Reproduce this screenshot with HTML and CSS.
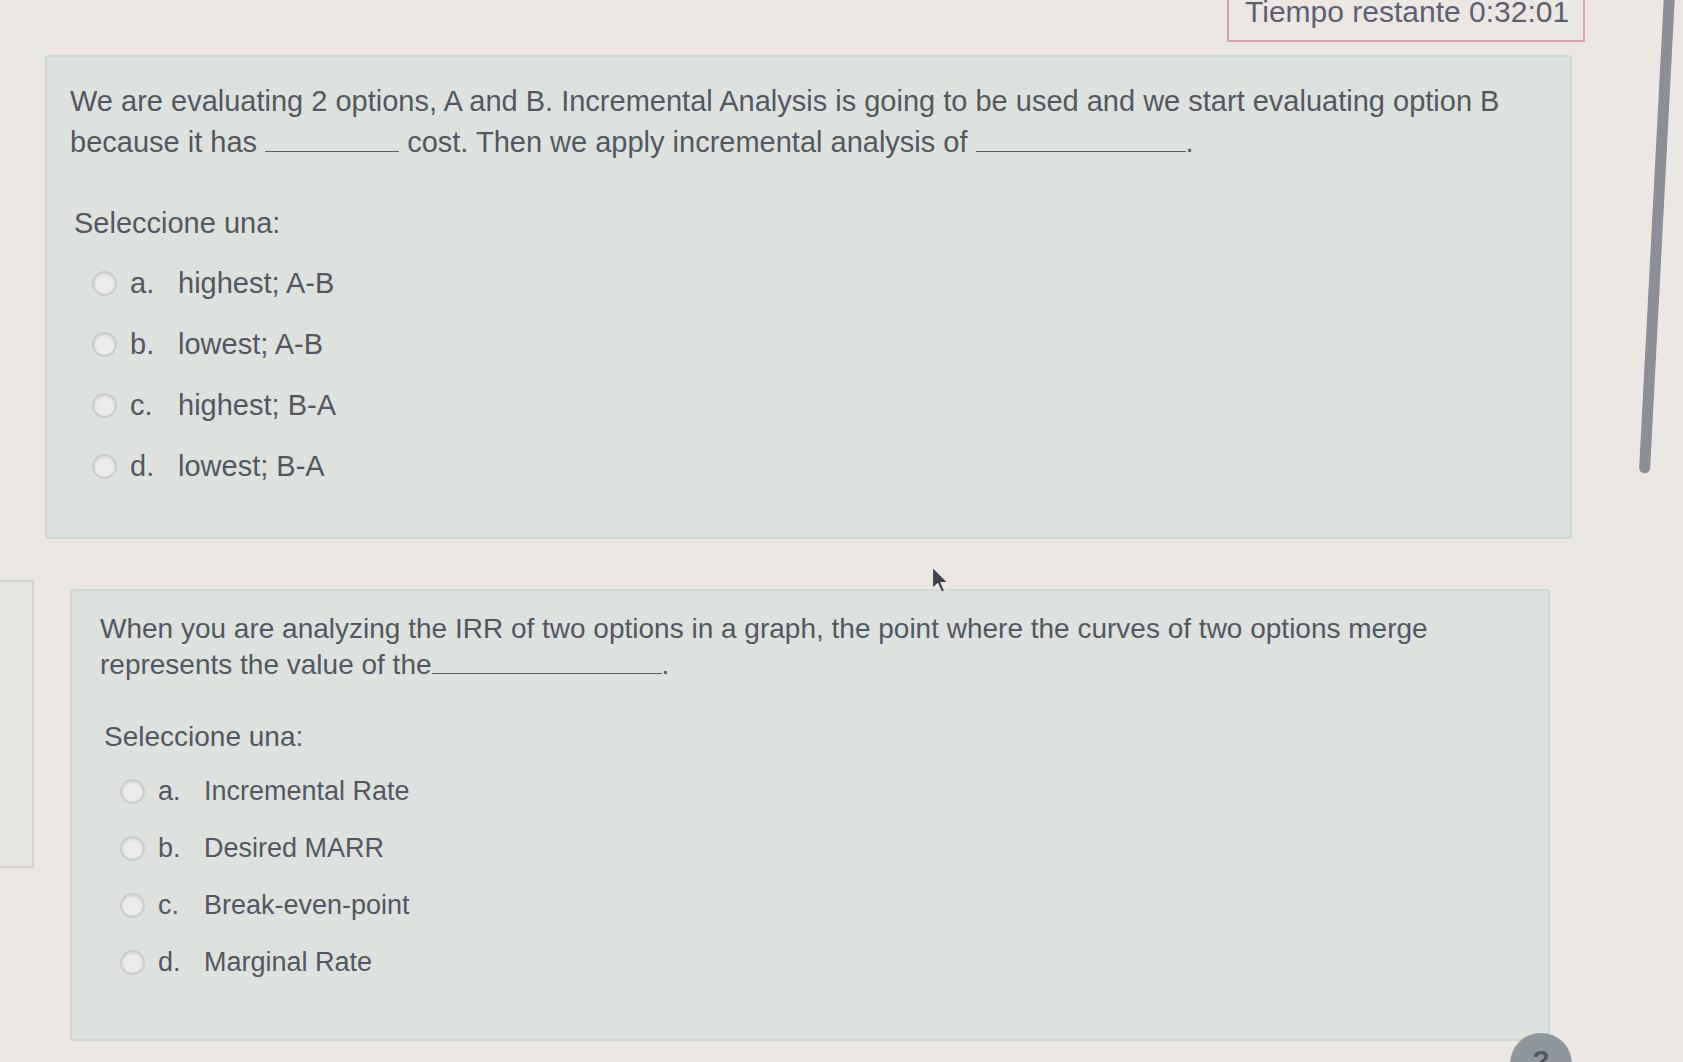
FILE: index.html
```html
<!DOCTYPE html>
<html lang="es">
<head>
<meta charset="utf-8">
<title>Cuestionario</title>
<link rel="stylesheet" href="styles.css">
</head>
<body>
<div class="page">
  <div class="timer-row">
    <div class="timer">Tiempo restante 0:32:01</div>
  </div>

  <div class="que que-1">
    <div class="qtext">We are evaluating 2 options, A and B. Incremental Analysis is going to be used and we start evaluating option B because it has <span class="blank b1"></span> cost. Then we apply incremental analysis of <span class="blank b2"></span>.</div>
    <div class="prompt">Seleccione una:</div>
    <div class="answers">
      <label class="opt"><span class="radio"></span><span class="letter">a.</span><span class="atext">highest; A-B</span></label>
      <label class="opt"><span class="radio"></span><span class="letter">b.</span><span class="atext">lowest; A-B</span></label>
      <label class="opt"><span class="radio"></span><span class="letter">c.</span><span class="atext">highest; B-A</span></label>
      <label class="opt"><span class="radio"></span><span class="letter">d.</span><span class="atext">lowest; B-A</span></label>
    </div>
  </div>

  <div class="que que-2">
    <div class="qtext">When you are analyzing the IRR of two options in a graph, the point where the curves of two options merge represents the value of the<span class="blank b3"></span>.</div>
    <div class="prompt">Seleccione una:</div>
    <div class="answers">
      <label class="opt"><span class="radio"></span><span class="letter">a.</span><span class="atext">Incremental Rate</span></label>
      <label class="opt"><span class="radio"></span><span class="letter">b.</span><span class="atext">Desired MARR</span></label>
      <label class="opt"><span class="radio"></span><span class="letter">c.</span><span class="atext">Break-even-point</span></label>
      <label class="opt"><span class="radio"></span><span class="letter">d.</span><span class="atext">Marginal Rate</span></label>
    </div>
  </div>
</div>

<div class="drawer-edge"></div>
<div class="scrollbar"></div>
<div class="help">?</div>
<svg class="cursor" width="22" height="30" viewBox="0 0 20 28"><path d="M2 1 L2 21 L7 16.5 L10.5 24.5 L13.5 23 L10 15.5 L16.5 15.5 Z" fill="#3f4247" stroke="#e8e8e8" stroke-width="1.2" stroke-linejoin="round"/></svg>
</body>
</html>
```

FILE: styles.css
```css
html, body {
  margin: 0;
  padding: 0;
}
body {
  background: #ebe8e4;
  font-family: "Liberation Sans", Arial, sans-serif;
  color: #53575f;
  width: 1683px;
  height: 1062px;
  overflow: hidden;
  position: relative;
}
.page {
  display: flex;
  flex-direction: column;
}
.timer-row {
  display: flex;
  justify-content: flex-end;
  padding-right: 98px;
}
.timer {
  margin-top: -14px;
  height: 56px;
  box-sizing: border-box;
  border: 2px solid #d8a3ab;
  border-top: none;
  padding: 11px 10px 0 16px;
  font-size: 30px;
  color: #5e5f72;
  line-height: 30px;
  width: 358px;
  white-space: nowrap;
}
.que {
  background: #dde2df;
  border: 2px solid #cdd7d3;
  border-radius: 4px;
  box-sizing: border-box;
}
.que-1 {
  margin: 13px 0 0 45px;
  width: 1527px;
  height: 484px;
  padding: 24px 20px 0 23px;
}
.que-2 {
  margin: 50px 0 0 70px;
  width: 1480px;
  height: 452px;
  padding: 20px 20px 0 28px;
}
.qtext {
  font-size: 29px;
  line-height: 41px;
}
.que-2 .qtext { font-size: 28px; line-height: 36px; }
.blank {
  display: inline-block;
  border-bottom: 1.5px solid #5a5d63;
  height: 24px;
  vertical-align: baseline;
}
.b1 { width: 134px; }
.b2 { width: 210px; }
.b3 { width: 230px; }
.prompt {
  font-size: 29px;
  margin-top: 44px;
  margin-left: 4px;
  line-height: 32px;
}
.que-2 .prompt { font-size: 28px; margin-top: 38px; }
.answers {
  display: flex;
  flex-direction: column;
  gap: 28px;
  margin-top: 28px;
  margin-left: 22px;
}
.que-2 .answers { gap: 24px; margin-top: 22px; margin-left: 20px; }
.opt {
  display: flex;
  align-items: center;
  font-size: 29px;
  height: 33px;
}
.que-2 .opt { font-size: 27px; }
.radio {
  width: 25px;
  height: 25px;
  border-radius: 50%;
  background: #ececea;
  border: 2px solid #c9cccb;
  box-sizing: border-box;
  margin-right: 13px;
  box-shadow: inset 0 1px 3px rgba(0,0,0,0.12);
}
.letter {
  width: 48px;
}
.que-2 .letter { width: 46px; }
.drawer-edge {
  position: absolute;
  left: -4px;
  top: 580px;
  width: 38px;
  height: 288px;
  border: 2px solid #d4d3d2;
  box-sizing: border-box;
  background: #e8e6e3;
}
.scrollbar {
  position: absolute;
  left: 1664px;
  top: -6px;
  width: 11px;
  height: 480px;
  border-radius: 6px;
  background: #8b9096;
  transform: rotate(3deg);
  transform-origin: top center;
}
.help {
  position: absolute;
  left: 1510px;
  top: 1033px;
  width: 62px;
  height: 62px;
  border-radius: 50%;
  background: #8f969c;
  color: #50555b;
  font-size: 28px;
  font-weight: bold;
  display: flex;
  justify-content: center;
  padding-top: 12px;
  box-sizing: border-box;
}
.cursor {
  position: absolute;
  left: 930px;
  top: 566px;
}
```
